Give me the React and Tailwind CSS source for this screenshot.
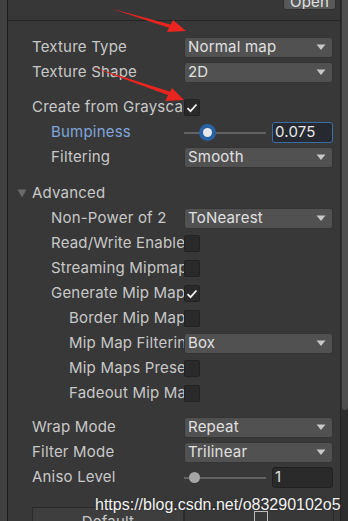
import React from "react";

const font = { fontFamily: "Inter, 'Noto Sans', sans-serif" };

function Caret() {
  return (
    <svg width="10" height="7" viewBox="0 0 10 7" className="shrink-0">
      <path d="M0.5 0.5 L9.5 0.5 L5 6 Z" fill="#c8c8c8" />
    </svg>
  );
}

function Dropdown({ value }) {
  return (
    <div className="h-[21px] w-[149px] rounded-[3px] bg-[#515151] border border-[#353535] flex items-center justify-between pl-[3px] pr-[6px] text-[#e0e0e0]">
      <span>{value}</span>
      <Caret />
    </div>
  );
}

function Check({ checked }) {
  return (
    <div className="w-[16px] h-[17px] rounded-[2px] bg-[#2a2a2a] border border-[#222] flex items-center justify-center">
      {checked && (
        <svg width="12" height="10" viewBox="0 0 12 10">
          <path d="M1.5 5.2 L4.5 8.2 L10.5 1.5" stroke="#f0f0f0" strokeWidth="1.8" fill="none" />
        </svg>
      )}
    </div>
  );
}

function NumField({ value, focused }) {
  return (
    <div
      className={
        "h-[21px] w-[61px] rounded-[3px] flex items-center pl-[2px] " +
        (focused ? "bg-[#262a30] border border-[#3b6ea5] text-[#e8e8e8]" : "bg-[#2a2a2a] border border-[#212121] text-[#e0e0e0]")
      }
    >
      {value}
    </div>
  );
}

function Slider({ pos, active, value }) {
  return (
    <div className="flex items-center w-[149px]">
      <div className="relative w-[82px] h-[21px] flex items-center">
        <div className="w-full h-[2px] bg-[#626262]" />
        {active ? (
          <div
            className="absolute w-[17px] h-[17px] rounded-full bg-[#2763a4] flex items-center justify-center"
            style={{ left: pos - 8.5, top: 2 }}
          >
            <div className="w-[9px] h-[9px] rounded-full bg-[#e8e8e8]" />
          </div>
        ) : (
          <div
            className="absolute w-[11px] h-[11px] rounded-full bg-[#a5a5a5]"
            style={{ left: pos - 5.5, top: 5 }}
          />
        )}
      </div>
      <div className="ml-[6px]">
        <NumField value={value} focused={active} />
      </div>
    </div>
  );
}

function Row({ label, indent = 0, children, blue, className = "" }) {
  const pl = [24, 43, 61][indent];
  return (
    <div className={"flex items-center h-[25px] " + className}>
      <div
        className={"w-[176px] shrink-0 overflow-hidden whitespace-nowrap " + (blue ? "text-[#7fa6dc]" : "text-[#c8c8c8]")}
        style={{ paddingLeft: pl }}
      >
        {label}
      </div>
      <div className="flex items-center">{children}</div>
    </div>
  );
}

export default function App() {
  return (
    <div className="relative w-[348px] h-[521px] overflow-hidden flex bg-[#383838] text-[15px] tracking-[0.2px]" style={font}>
      <div className="w-[7px] shrink-0 bg-[#404040]" />
      <div className="w-[1px] shrink-0 bg-[#1b1b1b]" />
      <div className="flex-1 flex flex-col bg-[#383838]">
        <div className="h-[21px] shrink-0 border-b border-[#252525] bg-[#373737] flex justify-end pr-[4px]">
          <div className="w-[53px] h-[11px] -mt-[1px] rounded-b-[3px] bg-[#585858] border border-[#2f2f2f] text-[#e0e0e0] leading-[4px] text-center overflow-hidden">
            Open
          </div>
        </div>
        <div className="pt-[14px] flex flex-col">
          <Row label="Texture Type"><Dropdown value="Normal map" /></Row>
          <Row label="Texture Shape"><Dropdown value="2D" /></Row>
          <Row label="Create from Grayscale" className="mt-[10px]"><Check checked /></Row>
          <Row label="Bumpiness" indent={1} blue><Slider pos={23} active value="0.075" /></Row>
          <Row label="Filtering" indent={1}><Dropdown value="Smooth" /></Row>
          <div className="flex items-center h-[25px] mt-[11px] text-[#c8c8c8]">
            <div className="pl-[9px] w-[24px]">
              <svg width="10" height="9" viewBox="0 0 10 9">
                <path d="M0.5 0.5 L9.5 0.5 L5 8.5 Z" fill="#6a6a6a" />
              </svg>
            </div>
            Advanced
          </div>
          <Row label="Non-Power of 2" indent={1}><Dropdown value="ToNearest" /></Row>
          <Row label="Read/Write Enabled" indent={1}><Check /></Row>
          <Row label="Streaming Mipmaps" indent={1}><Check /></Row>
          <Row label="Generate Mip Maps" indent={1}><Check checked /></Row>
          <Row label="Border Mip Maps" indent={2}><Check /></Row>
          <Row label="Mip Map Filtering" indent={2}><Dropdown value="Box" /></Row>
          <Row label="Mip Maps Preserve Coverage" indent={2}><Check /></Row>
          <Row label="Fadeout Mip Maps" indent={2}><Check /></Row>
          <Row label="Wrap Mode" className="mt-[9px]"><Dropdown value="Repeat" /></Row>
          <Row label="Filter Mode"><Dropdown value="Trilinear" /></Row>
          <Row label="Aniso Level"><Slider pos={10} value="1" /></Row>
          <div className="flex mt-[17px] h-[20px]">
            <div className="ml-[24px] w-[152px] bg-[#3e3e3e] border border-[#2a2a2a] border-b-0 text-[#c8c8c8] text-center pt-[3px]">
              Default
            </div>
            <div className="w-[150px] border border-[#2a2a2a] border-b-0 flex justify-center pt-[3px]">
              <div className="w-[14px] h-[14px] border border-[#bdbdbd] ml-[4px]" />
            </div>
          </div>
        </div>
      </div>
      <div className="w-[1px] shrink-0 bg-[#232323]" />
      <div className="w-[7px] shrink-0 bg-[#2e2e2e] flex flex-col">
        <div className="h-[410px] bg-[#4e4e4e] rounded-b-[3px] ml-[1px]" />
      </div>

      <div
        className="absolute left-[95px] top-[493px] text-[16px] text-[#f2f2f2] whitespace-nowrap tracking-[0px]"
        style={{ fontFamily: "'Liberation Sans', Arial, sans-serif", textShadow: "0 0 2px rgba(0,0,0,0.3)" }}
      >
        https://blog.csdn.net/o83290102o5
      </div>

      <svg className="absolute left-0 top-0 pointer-events-none" width="348" height="521" viewBox="0 0 348 521">
        <path d="M111 8.5 L172 25 L171 28.5 Z" fill="#e8251f" />
        <path d="M186 31 L167 32 L173 20 Z" fill="#e8251f" />
        <path d="M89 66 L171 92 L169 95.5 Z" fill="#e8251f" />
        <path d="M184 100 L165 101 L172 88 Z" fill="#e8251f" />
      </svg>
    </div>
  );
}
